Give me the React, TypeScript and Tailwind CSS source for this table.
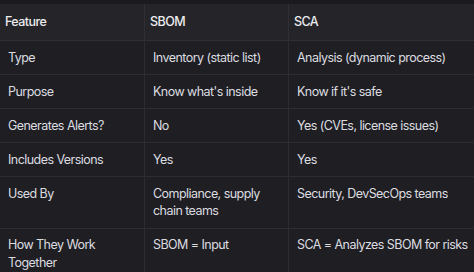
import React from "react";

const rows: [string, string, string][] = [
  ["Type", "Inventory (static list)", "Analysis (dynamic process)"],
  ["Purpose", "Know what's inside", "Know if it's safe"],
  ["Generates Alerts?", "No", "Yes (CVEs, license issues)"],
  ["Includes Versions", "Yes", "Yes"],
  ["Used By", "Compliance, supply chain teams", "Security, DevSecOps teams"],
  ["How They Work Together", "SBOM = Input", "SCA = Analyzes SBOM for risks"],
];

export default function App() {
  return (
    <div
      className="w-[474px] h-[272px] overflow-hidden bg-[#1f1f23] text-[12.5px] tracking-[-0.55px] antialiased"
      style={{ fontFamily: "Inter, 'Noto Sans', sans-serif" }}
    >
      <div className="h-[4px] bg-[#1b1b1f]" />
      <div className="grid grid-cols-[144px_144px_186px] bg-[#252529] border-b border-[#2f2f34] text-[#ececef] font-medium">
        <div className="h-[36px] flex items-center px-[5px]">Feature</div>
        <div className="h-[36px] flex items-center px-[5px] border-l border-[#2f2f34]">SBOM</div>
        <div className="h-[36px] flex items-center px-[5px] border-l border-[#2f2f34]">SCA</div>
      </div>
      {rows.map((r, i) => (
        <div
          key={i}
          className="grid grid-cols-[144px_144px_186px] border-b border-[#2c2c31] text-[#dcdce0] leading-[17.5px]"
        >
          <div className="px-[8px] py-[7.75px]">{r[0]}</div>
          <div className="px-[8px] py-[7.75px] border-l border-[#2c2c31]">{r[1]}</div>
          <div className="pl-[8px] pr-0 py-[7.75px] border-l border-[#2c2c31] whitespace-nowrap">{r[2]}</div>
        </div>
      ))}
    </div>
  );
}
